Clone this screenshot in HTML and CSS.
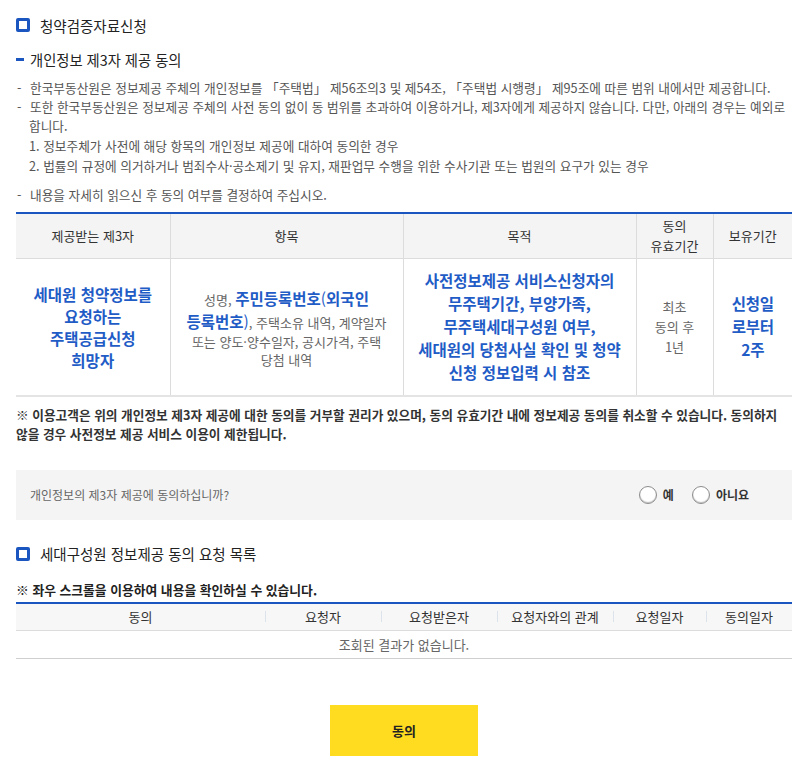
FILE: index.html
```html
<!DOCTYPE html>
<html lang="ko">
<head>
<meta charset="utf-8">
<title>청약검증자료신청</title>
<link rel="stylesheet" href="styles.css">
</head>
<body>
<div class="page">
  <h2 class="sec-title"><span class="sq"></span>청약검증자료신청</h2>
  <h3 class="sub-title"><span class="bar"></span>개인정보 제3자 제공 동의</h3>
  <ul class="dash-list">
    <li>한국부동산원은 정보제공 주체의 개인정보를 「주택법」 제56조의3 및 제54조, 「주택법 시행령」 제95조에 따른 범위 내에서만 제공합니다.</li>
    <li>또한 한국부동산원은 정보제공 주체의 사전 동의 없이 동 범위를 초과하여 이용하거나, 제3자에게 제공하지 않습니다. 다만, 아래의 경우는 예외로<br>합니다.
      <div class="num-list">
        <div>1. 정보주체가 사전에 해당 항목의 개인정보 제공에 대하여 동의한 경우</div>
        <div>2. 법률의 규정에 의거하거나 범죄수사·공소제기 및 유지, 재판업무 수행을 위한 수사기관 또는 법원의 요구가 있는 경우</div>
      </div>
    </li>
    <li class="gap">내용을 자세히 읽으신 후 동의 여부를 결정하여 주십시오.</li>
  </ul>

  <table class="info">
    <colgroup>
      <col class="c1"><col class="c2"><col class="c3"><col class="c4"><col class="c5">
    </colgroup>
    <thead>
      <tr>
        <th>제공받는 제3자</th>
        <th>항목</th>
        <th>목적</th>
        <th>동의<br>유효기간</th>
        <th>보유기간</th>
      </tr>
    </thead>
    <tbody>
      <tr>
        <td class="blue">세대원 청약정보를<br>요청하는<br>주택공급신청<br>희망자</td>
        <td class="items">성명, <b class="em">주민등록번호</b><span class="em-n">(</span><b class="em">외국인</b><br><b class="em">등록번호</b><span class="em-n">)</span>, 주택소유 내역, 계약일자<br>또는 양도·양수일자, 공시가격, 주택<br>당첨 내역</td>
        <td class="blue purpose">사전정보제공 서비스신청자의<br>무주택기간, 부양가족,<br>무주택세대구성원 여부,<br>세대원의 당첨사실 확인 및 청약<br>신청 정보입력 시 참조</td>
        <td class="gray">최초<br>동의 후<br>1년</td>
        <td class="blue keep">신청일<br>로부터<br>2주</td>
      </tr>
    </tbody>
  </table>

  <p class="note">※ 이용고객은 위의 개인정보 제3자 제공에 대한 동의를 거부할 권리가 있으며, 동의 유효기간 내에 정보제공 동의를 취소할 수 있습니다. 동의하지<br>않을 경우 사전정보 제공 서비스 이용이 제한됩니다.</p>

  <div class="ask">
    <span class="ask-q">개인정보의 제3자 제공에 동의하십니까?</span>
    <div class="choices">
      <label class="choice"><input type="radio" name="agree"><span>예</span></label>
      <label class="choice"><input type="radio" name="agree"><span>아니요</span></label>
    </div>
  </div>

  <h2 class="sec-title second"><span class="sq"></span>세대구성원 정보제공 동의 요청 목록</h2>
  <p class="scroll-note">※ 좌우 스크롤을 이용하여 내용을 확인하실 수 있습니다.</p>

  <table class="list">
    <colgroup>
      <col class="l1"><col class="l2"><col class="l3"><col class="l4"><col class="l5"><col class="l6">
    </colgroup>
    <thead>
      <tr>
        <th>동의</th>
        <th>요청자</th>
        <th>요청받은자</th>
        <th>요청자와의 관계</th>
        <th>요청일자</th>
        <th>동의일자</th>
      </tr>
    </thead>
    <tbody>
      <tr><td colspan="6">조회된 결과가 없습니다.</td></tr>
    </tbody>
  </table>

  <div class="btn-row">
    <button class="btn-agree" type="button">동의</button>
  </div>
</div>
</body>
</html>
```

FILE: styles.css
```css
* { box-sizing: border-box; }

body {
  margin: 0;
  background: #fff;
  font-family: "Noto Sans CJK KR", "Noto Sans", sans-serif;
  color: #555;
}

.page {
  padding: 14px 8px 0 16px;
}

.sec-title {
  margin: 0;
  display: flex;
  align-items: center;
  height: 22px;
  font-size: 14.5px;
  font-weight: normal;
  color: #222;
}

.sq {
  width: 14px;
  height: 14px;
  border: 3px solid #1a55c0;
  border-radius: 2px;
  margin-right: 10px;
  flex: none;
}

.sub-title {
  margin: 13px 0 0;
  display: flex;
  align-items: center;
  height: 20px;
  font-size: 14.3px;
  font-weight: normal;
  color: #222;
}

.bar {
  width: 8px;
  height: 3px;
  background: #1a55c0;
  margin-right: 6px;
  flex: none;
}

.dash-list {
  list-style: none;
  margin: 8.5px 0 0;
  padding: 0;
  font-size: 12.7px;
  line-height: 19px;
  color: #555;
}

.dash-list > li {
  padding-left: 13px;
}

.dash-list > li::before {
  content: "-";
  display: inline-block;
  width: 13px;
  margin-left: -13px;
  padding-left: 1px;
}

.dash-list > li.gap {
  margin-top: 9px;
}

.num-list {
  margin-top: 1px;
  line-height: 20px;
}

table {
  width: 776px;
  border-collapse: collapse;
  table-layout: fixed;
}

.info {
  margin-top: 8px;
  border-top: 2px solid #1a55c0;
  border-bottom: 2px solid #e4e4e4;
}

.info col.c1 { width: 154px; }
.info col.c2 { width: 233px; }
.info col.c3 { width: 233px; }
.info col.c4 { width: 77px; }
.info col.c5 { width: 79px; }

.info th {
  height: 46px;
  background: #f4f4f4;
  font-size: 13px;
  font-weight: normal;
  color: #333;
  line-height: 20px;
  border-bottom: 1px solid #dcdcdc;
  border-left: 1px solid #dcdcdc;
  padding: 0;
}

.info td {
  height: 137px;
  text-align: center;
  vertical-align: middle;
  border-left: 1px solid #dcdcdc;
  padding: 0;
}

.info th:first-child,
.info td:first-child {
  border-left: none;
}

.info td.blue {
  color: #1f5cc6;
  font-weight: bold;
  font-size: 15.5px;
  line-height: 22px;
}

.info td.purpose {
  line-height: 23px;
}

.info td.keep {
  line-height: 23px;
  letter-spacing: -0.3px;
}

.info td.items {
  font-size: 13px;
  line-height: 18px;
  color: #666;
  padding-top: 2px;
}

.em {
  color: #1f5cc6;
  font-size: 15.5px;
  font-weight: bold;
  line-height: 23px;
}

.em-n {
  color: #1f5cc6;
  font-size: 15.5px;
  line-height: 23px;
}

.info td.gray {
  font-size: 13px;
  line-height: 20px;
  color: #666;
}

.note {
  margin: 8px 0 0;
  font-size: 12.7px;
  line-height: 19px;
  font-weight: bold;
  color: #333;
}

.ask {
  margin-top: 27px;
  height: 50px;
  background: #f4f4f4;
  display: flex;
  align-items: center;
  justify-content: space-between;
  padding: 0 43px 0 14px;
}

.ask-q {
  font-size: 12px;
  color: #666;
}

.choices {
  display: flex;
  align-items: center;
  gap: 18px;
}

.choice {
  display: flex;
  align-items: center;
  gap: 6px;
  font-size: 12px;
  font-weight: bold;
  color: #333;
}

.choice input {
  -webkit-appearance: none;
  appearance: none;
  margin: 0;
  width: 18px;
  height: 18px;
  border-radius: 50%;
  border: 1px solid #8c8c8c;
  background: #fff;
  box-shadow: inset 0 -1px 1px rgba(0, 0, 0, 0.25);
}

.sec-title.second {
  margin-top: 23px;
}

.scroll-note {
  margin: 16px 0 0;
  font-size: 12.8px;
  line-height: 18px;
  font-weight: bold;
  color: #222;
}

.list {
  margin-top: 3px;
  border-top: 2px solid #1a55c0;
}

.list col.l1 { width: 249px; }
.list col.l2 { width: 116px; }
.list col.l3 { width: 116px; }
.list col.l4 { width: 116px; }
.list col.l5 { width: 93px; }
.list col.l6 { width: 86px; }

.list th {
  height: 28px;
  padding: 0;
  font-size: 13px;
  font-weight: normal;
  color: #333;
  border-bottom: 1px solid #dcdcdc;
  background: linear-gradient(#dde3ea, #dde3ea) left center / 1px 11px no-repeat, #f7f7f7;
}

.list th:first-child {
  background: #f7f7f7;
}

.list td {
  height: 28px;
  padding: 0;
  text-align: center;
  font-size: 13px;
  color: #666;
  border-bottom: 1px solid #cfcfcf;
}

.btn-row {
  display: flex;
  justify-content: center;
  margin-top: 46px;
}

.btn-agree {
  width: 148px;
  height: 51px;
  border: none;
  background: #ffdc20;
  font-family: "Noto Sans CJK KR", sans-serif;
  font-size: 13px;
  font-weight: bold;
  color: #222;
  cursor: pointer;
}
```
